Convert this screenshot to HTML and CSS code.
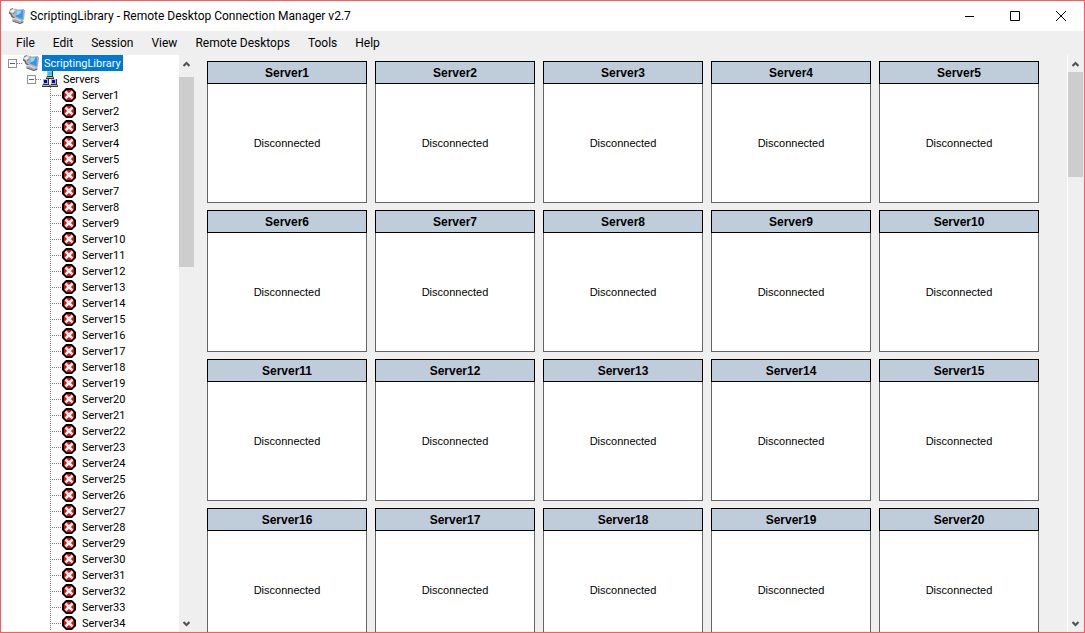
FILE: index.html
```html
<!doctype html>
<html lang="en">
<head>
<meta charset="utf-8">
<meta name="viewport" content="width=device-width, initial-scale=1">
<title>ScriptingLibrary - Remote Desktop Connection Manager v2.7</title>
<link rel="stylesheet" href="styles.css">
</head>

<body>
<svg class="symbols" width="0" height="0" aria-hidden="true">
	<symbol id="icon-remote" viewBox="0 0 16 16">
		<path d="M0 3 1.500 1 5 .5 8 1 9 3 8 9 5 10 2 7 0 5z" fill="#b4b6bb"/>
		<path d="M1 3.500 3 1.500 6 1.500 5 4 3 5z" fill="#efeff1"/>
		<path d="M0 4.500 2 6 3 8.500 6 10.500" fill="none" stroke="#66686e" stroke-width="1.500"/>
		<path d="M4 5.500 7 4M1 1.500 4 .5" fill="none" stroke="#7b7d83"/>
		<path d="M6 2 14.500 1 16 2.500 15 11.500 13 12.500 6 9.500z" fill="#a3afbd"/>
		<path d="M7.500 3 14 2.200 13.500 11 7 8.500z" fill="#2f98ee"/>
		<path d="M7.500 3 12.500 2.400 11 6 7.200 7.500z" fill="#8adcff"/>
		<path d="M3 11 6 9.500 12 12 14.500 12.500 14 15 11 16 4 13.500z" fill="#a9abb0"/>
		<path d="M4 11 6 10.500 12 13" fill="none" stroke="#e4e4e6"/>
		<path d="M3.500 13 11 15.500 14.500 14" fill="none" stroke="#66686e"/>
	</symbol>
	<symbol id="icon-group" viewBox="0 0 16 16">
		<path d="M5 0h6v5l1 2v1H4V7l1-2z" fill="#333"/>
		<path d="M5 0h5v5H5zM5 6h6v1H4z" fill="#b8b8b8"/>
		<path d="M6 1h4v3H6z" fill="#00e0e0"/>
		<path d="M1 8h6v5l1 2v1H0v-1l1-2zM9 8h6v5l1 2v1H8v-1l1-2z" fill="#333"/>
		<path d="M1 8h5v5H1zM1 14h6v1H0zM9 8h5v5H9zM9 14h6v1H8z" fill="#b8b8b8"/>
		<path d="M2 9h3v3H2zM10 9h3v3h-3z" fill="#0000d0"/>
	</symbol>
	<symbol id="icon-off" viewBox="0 0 14 14">
		<path d="M4 0h6l4 4v6l-4 4H4l-4-4V4z" fill="#000"/>
		<path d="M4.500 2h5L12 4.500v5L9.500 12h-5L2 9.500v-5z" fill="#f00"/>
		<path d="M3.500 3.500l7 7M10.500 3.500l-7 7" stroke="#fff" stroke-width="2.500"/>
	</symbol>
	<symbol id="icon-up" viewBox="0 0 7 6"><path d="M.5 5 3.500 2 6.500 5" fill="none" stroke="#505050" stroke-width="2"/></symbol>
	<symbol id="icon-down" viewBox="0 0 7 6"><path d="M.5 1 3.500 4 6.500 1" fill="none" stroke="#505050" stroke-width="2"/></symbol>
</svg>

<div class="window">
	<header class="titlebar">
		<svg class="icon"><use href="#icon-remote"/></svg>
		<h1>ScriptingLibrary - Remote Desktop Connection Manager v2.7</h1>
		<div class="controls">
			<button aria-label="Minimize"><svg width="10" height="10"><path d="M1 5.500h9" stroke="#000"/></svg></button>
			<button aria-label="Maximize"><svg width="10" height="10"><path d="M.5.5h9v9h-9z" fill="none" stroke="#000"/></svg></button>
			<button aria-label="Close"><svg width="10" height="10"><path d="M0 0l10 10M10 0L0 10" stroke="#000"/></svg></button>
		</div>
	</header>

	<nav class="menu">
		<button>File</button>
		<button>Edit</button>
		<button>Session</button>
		<button>View</button>
		<button>Remote Desktops</button>
		<button>Tools</button>
		<button>Help</button>
	</nav>

	<div class="content">
		<aside class="tree">
			<div class="row root">
				<button class="toggle" aria-label="Collapse ScriptingLibrary"></button><span class="dots"></span>
				<svg class="icon"><use href="#icon-remote"/></svg>
				<span class="label selected">ScriptingLibrary</span>
			</div>
			<div class="row group">
				<button class="toggle" aria-label="Collapse Servers"></button><span class="dots"></span>
				<svg class="icon"><use href="#icon-group"/></svg>
				<span class="label">Servers</span>
			</div>
			<ul class="servers" id="servers"></ul>
		</aside>
		<div class="scroll treescroll">
			<button aria-label="Scroll up"><svg width="7" height="6"><use href="#icon-up"/></svg></button>
			<div class="track"><div class="thumb"></div></div>
			<button aria-label="Scroll down"><svg width="7" height="6"><use href="#icon-down"/></svg></button>
		</div>
		<main class="thumbs" id="thumbs"></main>
		<div class="scroll mainscroll">
			<button aria-label="Scroll up"><svg width="7" height="6"><use href="#icon-up"/></svg></button>
			<div class="track"><div class="thumb"></div></div>
			<button aria-label="Scroll down"><svg width="7" height="6"><use href="#icon-down"/></svg></button>
		</div>
	</div>
</div>

<script src="script.js"></script>
</body>
</html>
```

FILE: styles.css
```css
*{
	box-sizing:border-box;
	}
body{
	margin:0;
	color:#000;
	font-family:"Liberation Sans", Arial, sans-serif;
	font-size:11px;
	}
button{
	margin:0;
	padding:0;
	border:none;
	background:none;
	color:inherit;
	font:inherit;
	}
svg{
	display:block;
	flex:none;
	}
.symbols{
	position:absolute;
	}
.icon{
	width:16px;
	height:16px;
	}
.window{
	display:flex;
	flex-direction:column;
	height:100vh;
	overflow:hidden;
	border:1px solid #ff5a5a;
	background-color:#efefef;
	}

/* title bar and menu */
.titlebar{
	display:flex;
	align-items:center;
	flex:none;
	height:30px;
	padding-left:8px;
	background-color:#fff;
	}
.titlebar h1{
	flex:1;
	margin:0 0 0 5px;
	font:12px/16px Roboto, "Segoe UI", sans-serif;
	white-space:nowrap;
	}
.controls{
	display:flex;
	height:100%;
	}
.controls button{
	display:flex;
	align-items:center;
	justify-content:center;
	width:46px;
	}
.menu{
	display:flex;
	align-items:center;
	flex:none;
	gap:18px;
	height:24px;
	padding-left:15px;
	font:12px/16px Roboto, "Segoe UI", sans-serif;
	}
.content{
	display:flex;
	flex:1;
	min-height:0;
	}

/* server tree */
.tree{
	flex:none;
	width:178px;
	overflow:hidden;
	background-color:#fff;
	font-family:Roboto, "Liberation Sans", sans-serif;
	}
.row{
	display:flex;
	align-items:center;
	height:16px;
	line-height:15px;
	}
.root{
	padding-left:7px;
	}
.group{
	padding-left:26px;
	}
.toggle{
	width:9px;
	height:9px;
	border:1px solid #919191;
	background:linear-gradient(#4b63a7, #4b63a7) center / 5px 1px no-repeat #fff;
	}
.dots{
	width:6px;
	height:1px;
	background:repeating-linear-gradient(90deg, #808080 0 1px, #fff 1px 2px);
	}
.label{
	padding:1px 2px 0;
	margin-left:3px;
	}
.selected{
	background-color:#0078d7;
	color:#fff;
	}
.servers{
	margin:0 0 0 49px;
	padding:0;
	list-style:none;
	background:repeating-linear-gradient(#808080 0 1px, #fff 1px 2px) left top / 1px 100% no-repeat;
	}
.servers .dots{
	width:12px;
	}
.servers .icon{
	width:14px;
	height:14px;
	}
.servers .label{
	margin-left:4px;
	}

/* scrollbars */
.scroll{
	display:flex;
	flex-direction:column;
	flex:none;
	width:15px;
	background-color:#efefef;
	}
.scroll button{
	display:flex;
	align-items:center;
	justify-content:center;
	height:17px;
	}
.track{
	flex:1;
	}
.thumb{
	background-color:#cdcdcd;
	}
.treescroll .thumb{
	height:190px;
	margin-top:5px;
	}
.mainscroll{
	width:17px;
	border-left:1px solid #fff;
	border-right:1px solid #efefef;
	}
.mainscroll .thumb{
	height:105px;
	}

/* session thumbnails */
.thumbs{
	display:grid;
	grid-template-columns:repeat(auto-fill, 160px);
	align-content:start;
	gap:7px 8px;
	flex:1;
	padding:6px 0 0 13px;
	overflow:hidden;
	}
.session{
	display:flex;
	flex-direction:column;
	height:142px;
	border:1px solid #646464;
	border-top:none;
	background-color:#fff;
	}
.session h2{
	flex:none;
	height:23px;
	margin:0 -1px;
	padding-top:1px;
	border:1px solid #000;
	background-color:#bfcddb;
	font-size:12px;
	line-height:20px;
	text-align:center;
	}
.session p{
	margin:auto;
	}
```

FILE: script.js
```js
var servers = document.getElementById("servers");
var thumbs = document.getElementById("thumbs");

for (var i = 1; i <= 34; i++) {
	servers.innerHTML += '<li class="row"><span class="dots"></span><svg class="icon"><use href="#icon-off"/></svg><span class="label">Server' + i + '</span></li>';
}
for (var j = 1; j <= 20; j++) {
	thumbs.innerHTML += '<section class="session"><h2>Server' + j + '</h2><p>Disconnected</p></section>';
}
```
